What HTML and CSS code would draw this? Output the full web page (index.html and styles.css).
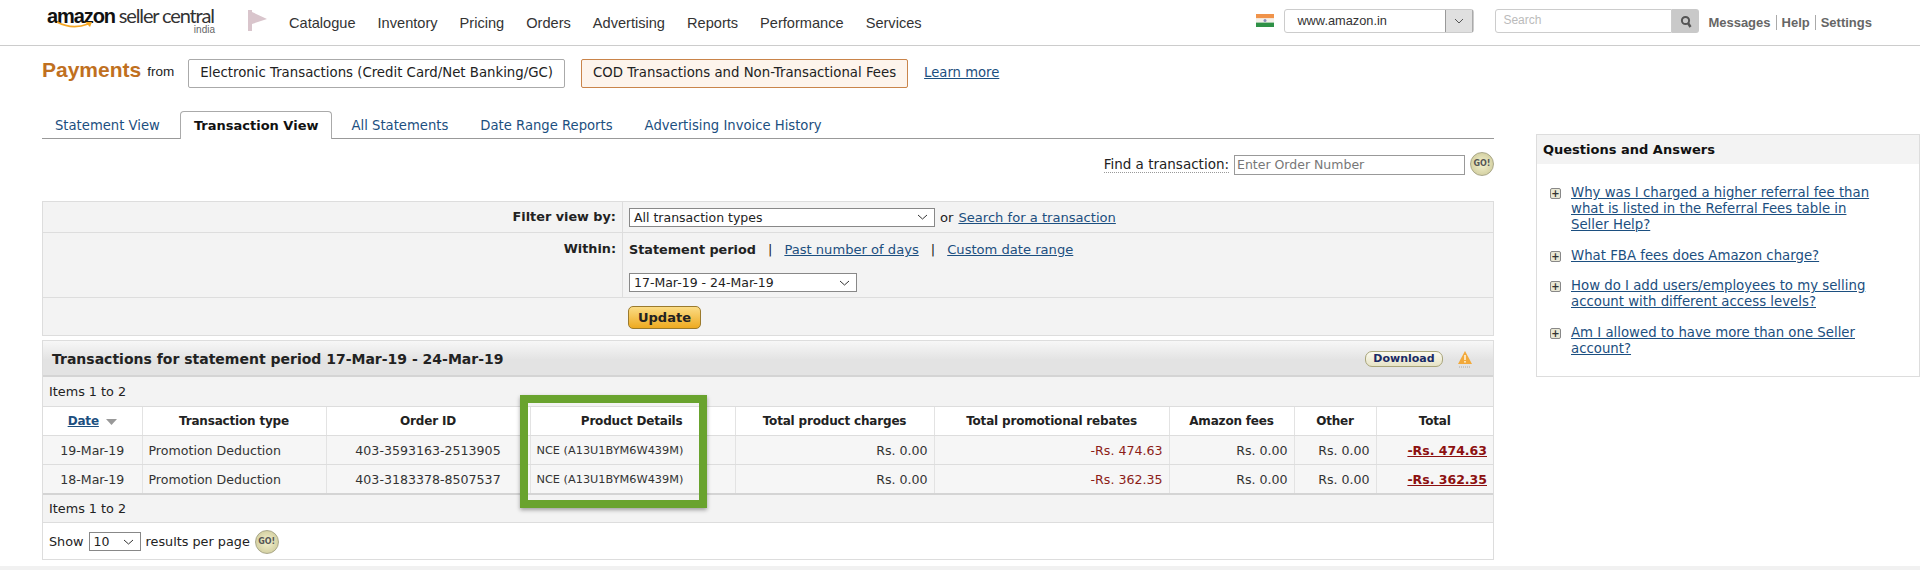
FILE: index.html
```html
<!DOCTYPE html>
<html lang="en">
<head>
    <meta charset="UTF-8">
    <title>Payments - Transaction View</title>
    <link rel="stylesheet" href="styles.css">
</head>
<body>
    <div class="top-bar">
        <div class="logo">
            <div class="logo-line"><b>amazon</b> <span>seller central</span></div>
            <svg class="logo-smile" width="36" height="8" viewBox="0 0 36 8"><path d="M0 1 Q15 9 31 3" fill="none" stroke="#f5a623" stroke-width="1.8"/><path d="M28 1 L35 1 L33 6 Z" fill="#f5a623"/></svg>
            <div class="logo-india">india</div>
        </div>
        <svg class="pin" width="20" height="21" viewBox="0 0 20 21"><path d="M1 0 H5 V21 H1 Z M5 2 L20 9 L5 14 Z" fill="#d9c5cc"/></svg>
        <nav class="nav">
            <a>Catalogue</a>
            <a>Inventory</a>
            <a>Pricing</a>
            <a>Orders</a>
            <a>Advertising</a>
            <a>Reports</a>
            <a>Performance</a>
            <a>Services</a>
        </nav>
        <svg class="flag" width="18" height="13" viewBox="0 0 18 13"><rect width="18" height="4.4" fill="#f0934a"/><rect y="4.4" width="18" height="4.2" fill="#f4f1ea"/><rect y="8.6" width="18" height="4.4" fill="#2f9146"/><circle cx="9" cy="6.5" r="1.5" fill="#8b8fb8"/></svg>
        <div class="market">
            <span class="market-name">www.amazon.in</span>
            <span class="market-arrow"><svg width="10" height="6" viewBox="0 0 10 6"><path d="M1 1 L5 5 L9 1" fill="none" stroke="#555" stroke-width="1"/></svg></span>
        </div>
        <div class="search">
            <span class="search-box">Search</span>
            <span class="search-btn"><svg width="12" height="13" viewBox="0 0 12 13"><circle cx="5.5" cy="5.5" r="3.6" fill="none" stroke="#555" stroke-width="2"/><path d="M8 8 L10.5 12" stroke="#555" stroke-width="2.4"/></svg></span>
        </div>
        <div class="top-links"><a>Messages</a><a>Help</a><a>Settings</a></div>
    </div>

    <div class="page">
        <div class="content">
            <div class="title-row">
                <h1>Payments</h1>
                <span class="from">from</span>
                <a class="source">Electronic Transactions (Credit Card/Net Banking/GC)</a>
                <a class="source source-on">COD Transactions and Non-Transactional Fees</a>
                <a class="link learn">Learn more</a>
            </div>

            <div class="tabs">
                <a class="tab">Statement View</a>
                <a class="tab tab-on">Transaction View</a>
                <a class="tab">All Statements</a>
                <a class="tab">Date Range Reports</a>
                <a class="tab">Advertising Invoice History</a>
            </div>

            <div class="find">
                <span class="find-label">Find a transaction:</span>
                <span class="find-input">Enter Order Number</span>
                <span class="go go-big">GO!</span>
            </div>

            <div class="filter">
                <div class="filter-label filter-r1">Filter view by:</div>
                <div class="filter-value filter-r1">
                    <div class="pick pick-types">All transaction types<svg width="11" height="6" viewBox="0 0 11 6"><path d="M1 1 L5.5 5 L10 1" fill="none" stroke="#333" stroke-width="1"/></svg></div>
                    <span>or</span>
                    <a class="link">Search for a transaction</a>
                </div>
                <div class="filter-label filter-r2">Within:</div>
                <div class="filter-value filter-r2 filter-stack">
                    <div class="within">
                        <b>Statement period</b>
                        <span>|</span>
                        <a class="link">Past number of days</a>
                        <span>|</span>
                        <a class="link">Custom date range</a>
                    </div>
                    <div class="pick pick-dates">17-Mar-19 - 24-Mar-19<svg width="11" height="6" viewBox="0 0 11 6"><path d="M1 1 L5.5 5 L10 1" fill="none" stroke="#333" stroke-width="1"/></svg></div>
                </div>
                <div class="filter-label filter-r3"></div>
                <div class="filter-button filter-r3"><a class="update">Update</a></div>
            </div>

            <div class="results">
                <div class="results-head">
                    <h2>Transactions for statement period 17-Mar-19 - 24-Mar-19</h2>
                    <a class="download">Download</a>
                    <svg class="warn" width="16" height="18" viewBox="0 0 16 18"><path d="M8 1 L15 14 H1 Z" fill="#f2a93b"/><rect x="7.2" y="5" width="1.6" height="5" fill="#fff3d8"/><rect x="7.2" y="11" width="1.6" height="1.6" fill="#fff3d8"/><path d="M2 17 H14" stroke="#aaa" stroke-dasharray="1 1"/></svg>
                </div>
                <div class="items">Items 1 to 2</div>
                <table class="grid">
                    <colgroup>
                        <col class="c-date"><col class="c-type"><col class="c-order"><col class="c-prod"><col class="c-charge"><col class="c-promo"><col class="c-fees"><col class="c-other"><col class="c-total">
                    </colgroup>
                    <thead>
                        <tr>
                            <th><a class="link">Date</a><svg class="sort" width="11" height="6" viewBox="0 0 11 6"><path d="M0 0 H11 L5.5 6 Z" fill="#999"/></svg></th>
                            <th>Transaction type</th>
                            <th>Order ID</th>
                            <th class="th-prod">Product Details</th>
                            <th>Total product charges</th>
                            <th>Total promotional rebates</th>
                            <th>Amazon fees</th>
                            <th>Other</th>
                            <th>Total</th>
                        </tr>
                    </thead>
                    <tbody>
                        <tr>
                            <td class="mid">19-Mar-19</td>
                            <td>Promotion Deduction</td>
                            <td class="mid">403-3593163-2513905</td>
                            <td class="small">NCE (A13U1BYM6W439M)</td>
                            <td class="num">Rs. 0.00</td>
                            <td class="num neg">-Rs. 474.63</td>
                            <td class="num">Rs. 0.00</td>
                            <td class="num">Rs. 0.00</td>
                            <td class="num"><a class="total">-Rs. 474.63</a></td>
                        </tr>
                        <tr>
                            <td class="mid">18-Mar-19</td>
                            <td>Promotion Deduction</td>
                            <td class="mid">403-3183378-8507537</td>
                            <td class="small">NCE (A13U1BYM6W439M)</td>
                            <td class="num">Rs. 0.00</td>
                            <td class="num neg">-Rs. 362.35</td>
                            <td class="num">Rs. 0.00</td>
                            <td class="num">Rs. 0.00</td>
                            <td class="num"><a class="total">-Rs. 362.35</a></td>
                        </tr>
                    </tbody>
                </table>
                <div class="items items-foot">Items 1 to 2</div>
                <div class="per-page">
                    <span>Show</span>
                    <div class="pick pick-num">10<svg width="11" height="6" viewBox="0 0 11 6"><path d="M1 1 L5.5 5 L10 1" fill="none" stroke="#333" stroke-width="1"/></svg></div>
                    <span>results per page</span>
                    <span class="go">GO!</span>
                </div>
                <div class="highlight"></div>
            </div>
        </div>

        <aside class="qa">
            <div class="qa-head">Questions and Answers</div>
            <ul class="qa-list">
                <li><span class="plus">+</span><a class="link">Why was I charged a higher referral fee than what is listed in the Referral Fees table in Seller Help?</a></li>
                <li><span class="plus">+</span><a class="link">What FBA fees does Amazon charge?</a></li>
                <li><span class="plus">+</span><a class="link">How do I add users/employees to my selling account with different access levels?</a></li>
                <li><span class="plus">+</span><a class="link">Am I allowed to have more than one Seller account?</a></li>
            </ul>
        </aside>
    </div>
    <div class="page-end"></div>
</body>
</html>
```

FILE: styles.css
```css
html, body {
    margin: 0;
    height: 570px;
    overflow: hidden;
    background: #fff;
}
body {
    font-family: "DejaVu Sans", Verdana, sans-serif;
    font-size: 13.3px;
    color: #222;
}
a {
    cursor: pointer;
}
.link {
    color: #1c4f80;
    text-decoration: underline;
}

/* top bar */
.top-bar {
    display: flex;
    align-items: center;
    height: 45px;
    border-bottom: 1px solid #ccc;
    font-family: "Liberation Sans", Arial, sans-serif;
    box-sizing: content-box;
}
.logo {
    position: relative;
    align-self: flex-start;
    width: 168px;
    height: 34px;
    margin-left: 47px;
    margin-top: 6px;
    color: #222;
}
.logo-line {
    font-family: "Lato", "Liberation Sans", sans-serif;
    font-size: 20px;
    line-height: 18px;
    white-space: nowrap;
    letter-spacing: -1.15px;
}
.logo-line b {
    font-family: "Liberation Sans", Arial, sans-serif;
    font-size: 20px;
    color: #111;
    letter-spacing: -1.1px;
}
.logo-line span {
    color: #333;
}
.logo-smile {
    position: absolute;
    left: 10px;
    top: 15px;
}
.logo-india {
    font-size: 10px;
    color: #666;
    text-align: right;
    line-height: 10px;
}
.pin {
    margin-left: 32px;
    margin-top: -4px;
}
.nav {
    display: flex;
    gap: 22px;
    margin-left: 22px;
    font-size: 14.6px;
    color: #333;
}
.flag {
    margin-left: auto;
    margin-top: -5px;
}
.market {
    display: flex;
    width: 190px;
    height: 24px;
    margin-left: 10px;
    margin-top: -3px;
    border: 1px solid #ccc;
    border-radius: 3px;
    box-sizing: border-box;
    font-size: 12.8px;
    line-height: 22px;
    color: #333;
}
.market-name {
    flex: 1;
    padding-left: 12px;
}
.market-arrow {
    display: flex;
    align-items: center;
    justify-content: center;
    width: 26px;
    background: #e0e0e0;
    border-left: 1px solid #999;
    border-right: 1px solid #aaa;
}
.search {
    display: flex;
    width: 204px;
    height: 24px;
    margin-left: 21px;
    margin-top: -3px;
    font-size: 12px;
    color: #bbb;
}
.search-box {
    flex: 1;
    border: 1px solid #ccc;
    border-radius: 3px 0 0 3px;
    padding-left: 7px;
    line-height: 21px;
}
.search-btn {
    display: flex;
    align-items: center;
    justify-content: center;
    width: 27px;
    background: #c9c9c9;
    border-radius: 0 3px 3px 0;
}
.top-links {
    display: flex;
    margin-left: 9px;
    margin-right: 48px;
    font-size: 13px;
    font-weight: bold;
    color: #666;
}
.top-links a {
    padding: 0 5px;
    border-left: 1px solid #aaa;
}
.top-links a:first-child {
    padding-left: 0;
    border-left: 0;
}
.top-links a:last-child {
    padding-right: 0;
}

/* page */
.page {
    display: flex;
    align-items: flex-start;
}
.content {
    width: 1452px;
    margin-left: 42px;
    flex: none;
}
.title-row {
    display: flex;
    align-items: center;
    height: 30px;
    margin-top: 12px;
}
h1 {
    margin: 0;
    font-family: "Liberation Sans", Arial, sans-serif;
    font-size: 21px;
    color: #c0701f;
    margin-top: -6px;
}
.from {
    margin-left: 6px;
    margin-right: 14px;
    margin-top: -3px;
    font-family: "Liberation Sans", Arial, sans-serif;
    font-size: 13.5px;
}
.source {
    padding: 0 11px;
    height: 29px;
    line-height: 26px;
    border: 1px solid #aaa;
    border-radius: 2px;
    box-sizing: border-box;
    white-space: nowrap;
    margin-right: 16px;
}
.source-on {
    background: #fdf4ec;
    border-color: #c9844a;
}
.learn {
    font-size: 13.2px;
    margin-top: -2px;
}
.tabs {
    display: flex;
    align-items: flex-end;
    height: 35px;
    margin-top: 15px;
    border-bottom: 1px solid #999;
}
.tab {
    height: 27px;
    line-height: 28px;
    padding: 0 15px;
    margin-bottom: -1px;
    font-size: 13.2px;
    color: #1c4f80;
    border: 1px solid transparent;
    border-bottom: 0;
    white-space: nowrap;
}
.tab:first-child {
    padding-left: 12px;
}
.tab-on {
    font-weight: bold;
    font-size: 13px;
    color: #111;
    background: #fff;
    border-color: #aaa;
    border-radius: 4px 4px 0 0;
    padding: 0 13px;
    margin: 0 3px -1px 4px;
}
.find {
    display: flex;
    align-items: center;
    justify-content: flex-end;
    height: 24px;
    margin-top: 14px;
}
.find-label {
    border-bottom: 1px dotted #999;
    line-height: 15px;
    font-size: 13.5px;
}
.find-input {
    width: 231px;
    height: 20px;
    margin-left: 5px;
    padding-left: 2px;
    border: 1px solid #999;
    box-sizing: border-box;
    line-height: 18px;
    color: #777;
    font-size: 12.5px;
}
.go {
    display: inline-block;
    width: 24px;
    height: 24px;
    border-radius: 50%;
    background: radial-gradient(#f4f2d0, #c9c592);
    border: 1px solid #aaa88a;
    box-sizing: border-box;
    font-size: 8px;
    font-weight: bold;
    line-height: 22px;
    text-align: center;
    color: #555;
}
.go-big {
    margin-left: 5px;
    margin-top: -2px;
}

/* filter panel */
.filter {
    display: grid;
    grid-template-columns: 580px 1fr;
    grid-template-rows: 31px 65px 37px;
    margin-top: 24px;
    background: #f3f3f3;
    border: 1px solid #ddd;
    box-sizing: border-box;
    height: 135px;
}
.filter-label {
    padding: 0 6px 0 0;
    text-align: right;
    font-weight: bold;
    font-size: 12.8px;
    line-height: 30px;
    border-right: 1px solid #ddd;
}
.filter-label.filter-r2 {
    line-height: 32px;
}
.filter-r1, .filter-r2 {
    border-bottom: 1px solid #ddd;
}
.filter-r3.filter-label {
    border-right: 0;
}
.filter-value {
    display: flex;
    align-items: center;
    gap: 5px;
    padding-left: 6px;
    font-size: 13.1px;
}
.filter-stack {
    flex-direction: column;
    align-items: flex-start;
    gap: 16px;
    padding-top: 9px;
}
.within {
    display: flex;
    gap: 12px;
}
.within b {
    font-size: 12.8px;
}
.filter-button {
    padding: 8px 0 0 5px;
}
.pick {
    display: flex;
    align-items: center;
    justify-content: space-between;
    height: 19px;
    padding: 0 6px 0 4px;
    background: #fff;
    border: 1px solid #888;
    box-sizing: border-box;
    font-size: 12.5px;
}
.pick-types {
    width: 306px;
}
.pick-dates {
    width: 228px;
}
.pick-num {
    width: 52px;
}
.update {
    display: inline-block;
    width: 73px;
    height: 23px;
    border: 1px solid #9b7a2c;
    border-radius: 5px;
    box-sizing: border-box;
    background: linear-gradient(#fbdc85, #eeaa20);
    font-weight: bold;
    font-size: 13px;
    text-align: center;
    line-height: 21px;
    color: #222;
}

/* results */
.results {
    position: relative;
    margin-top: 4px;
    border: 1px solid #ddd;
    border-top: 0;
    height: 220px;
    box-sizing: border-box;
}
.results-head {
    display: flex;
    align-items: center;
    height: 37px;
    padding: 1px 20px 0 9px;
    border-top: 1px solid #ddd;
    border-bottom: 2px solid #d4d4d4;
    box-sizing: border-box;
    background: linear-gradient(#f7f7f7, #e3e3e3 55%);
}
h2 {
    flex: 1;
    margin: 0;
    font-size: 14px;
    font-weight: bold;
    color: #222;
}
.download {
    height: 16px;
    width: 78px;
    border: 1px solid #a9a57a;
    border-radius: 7px;
    box-sizing: border-box;
    background: linear-gradient(#fbfaf0, #e6e3c6);
    font-size: 11px;
    font-weight: bold;
    line-height: 14px;
    text-align: center;
    color: #1a2a66;
    margin-right: 14px;
}
.items {
    height: 30px;
    padding-left: 6px;
    line-height: 29px;
    background: #f3f3f3;
    font-size: 12.8px;
    box-sizing: border-box;
    border-bottom: 1px solid #ddd;
}
.items-foot {
    height: 28px;
    line-height: 27px;
}
.grid {
    width: 100%;
    table-layout: fixed;
    border-collapse: collapse;
}
.c-date { width: 99px; }
.c-type { width: 184px; }
.c-order { width: 204px; }
.c-prod { width: 205px; }
.c-charge { width: 199px; }
.c-promo { width: 235px; }
.c-fees { width: 125px; }
.c-other { width: 82px; }
.grid th {
    height: 28px;
    padding: 0;
    font-size: 12px;
    letter-spacing: -0.18px;
    font-weight: bold;
    border-right: 1px solid #e3e3e3;
    border-bottom: 1px solid #ddd;
    background: #fff;
    white-space: nowrap;
}
.grid th:last-child, .grid td:last-child {
    border-right: 0;
}
.grid .th-prod {
    text-align: right;
    padding-right: 52px;
}
.sort {
    margin-left: 7px;
}
.grid td {
    height: 28px;
    padding: 0 6px;
    background: #f6f6f6;
    border-right: 1px solid #e3e3e3;
    border-bottom: 1px solid #ddd;
    white-space: nowrap;
    font-size: 12.6px;
    color: #333;
}
.grid tbody tr:last-child td {
    border-bottom: 2px solid #d4d4d4;
}
.mid {
    text-align: center;
}
.grid .small {
    font-size: 11.3px;
}
.num {
    text-align: right;
}
.grid .neg {
    color: #8c1d18;
}
.total {
    font-size: 12.5px;
    font-weight: bold;
    color: #8c1010;
    text-decoration: underline;
}
.per-page {
    display: flex;
    align-items: center;
    gap: 5px;
    height: 37px;
    padding-left: 6px;
    font-size: 12.8px;
}
.highlight {
    position: absolute;
    left: 477px;
    top: 55px;
    width: 187px;
    height: 113px;
    border: 8px solid #69a32e;
    box-sizing: border-box;
    box-shadow: 0 2px 4px rgba(0, 0, 0, .35);
}

/* side panel */
.qa {
    width: 384px;
    height: 243px;
    margin-left: 42px;
    margin-top: 88px;
    border: 1px solid #ddd;
    box-sizing: border-box;
    flex: none;
}
.qa-head {
    height: 29px;
    padding-left: 6px;
    line-height: 30px;
    background: #f3f3f3;
    font-size: 13px;
    font-weight: bold;
    color: #111;
}
.qa-list {
    list-style: none;
    margin: 0;
    padding: 21px 43px 0 13px;
    line-height: 16px;
}
.qa-list li {
    display: flex;
    margin-bottom: 14.5px;
}
.plus {
    flex: none;
    width: 11px;
    height: 11px;
    margin-top: 3px;
    margin-right: 10px;
    border: 1px solid #888;
    border-radius: 2px;
    box-sizing: border-box;
    background: #e9e7d4;
    font-size: 10px;
    font-weight: bold;
    line-height: 9px;
    text-align: center;
    color: #333;
}
.page-end {
    position: absolute;
    left: 0;
    right: 0;
    top: 566px;
    height: 4px;
    background: #f1f1f1;
}
```
